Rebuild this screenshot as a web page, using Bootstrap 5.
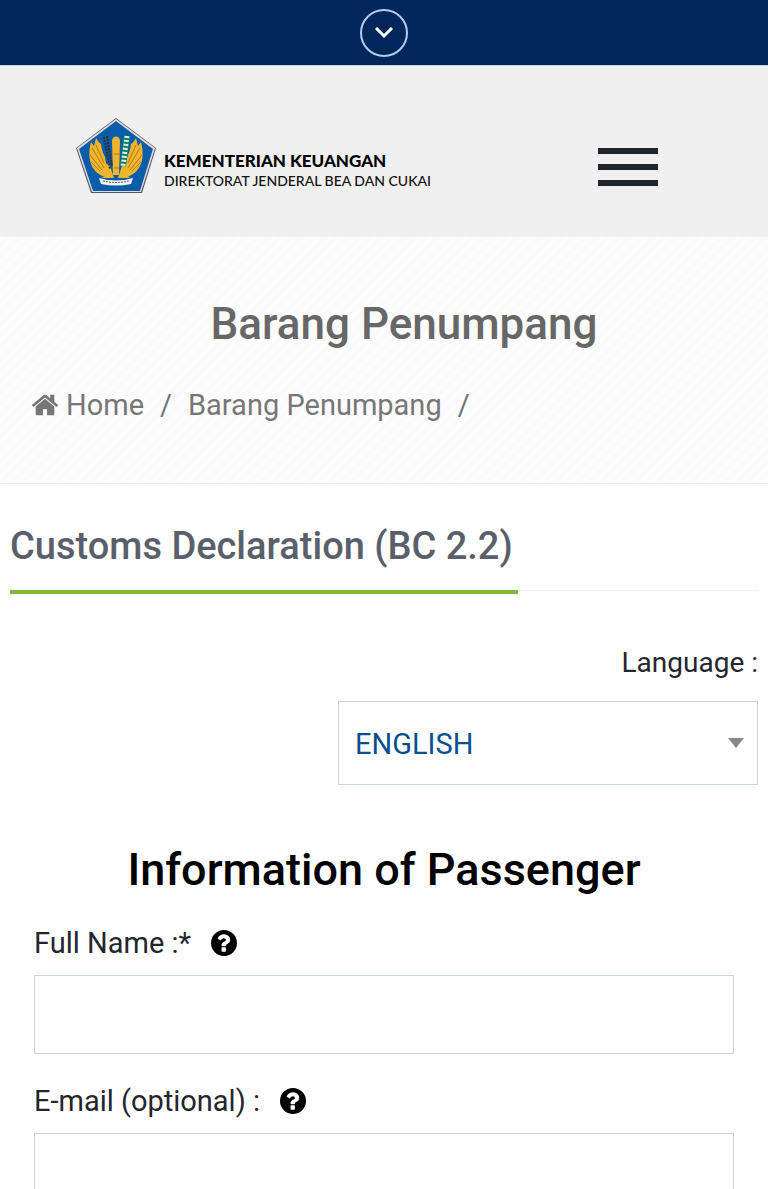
<!DOCTYPE html>
<html lang="en">
<head>
<meta charset="utf-8">
<meta name="viewport" content="width=device-width, initial-scale=1">
<title>Barang Penumpang</title>
<link href="https://cdn.jsdelivr.net/npm/bootstrap@5.3.0/dist/css/bootstrap.min.css" rel="stylesheet">
<style>
body { font-family: Roboto, sans-serif; font-size: 29px; line-height: 40px; color: #24262d; }
.topbar { background: #00265c; height: 65px; }
.round-toggle { width: 48px; height: 48px; border: 2px solid #b5cdec; }
.masthead { background: #f0f0f0; height: 172px; padding: 52px 110px 0 76px; border-top: 1px solid #c9d2df; }
.brand-name { font-family: Lato, sans-serif; color: #111; line-height: 20px; padding-top: 33px; }
.brand-name strong { font-size: 17px; font-weight: 900; color: #000; }
.brand-name span { font-size: 14px; font-weight: 500; }
.menu-toggle { gap: 10px; margin-top: 30px; }
.menu-bar { width: 60px; height: 6px; background: #22252b; }
.page-title { background: repeating-linear-gradient(135deg, #fdfdfd 0 4px, #fbfbfb 4px 8px); border-bottom: 1px solid #e9e9e9; padding: 60px 0 57px 32px; }
.page-title h1 { font-size: 44px; line-height: 54px; font-weight: 500; color: #676767; margin: 0 0 34px 8px; }
.crumbs { --bs-breadcrumb-divider-color: #6c757d; --bs-breadcrumb-item-padding-x: 16px; }
.crumbs a { color: #777; }
.section-head { border-bottom: 1px dotted #e4e4e4; margin: 32px 10px 0; height: 75px; }
.section-head h2 { font-size: 38px; line-height: 60px; font-weight: 500; color: #5a606b; border-bottom: 4px solid #7eb742; height: 78px; padding-right: 5px; margin: 0; }
.language { margin: 52px 10px 0; }
.language label { font-size: 28px; margin-bottom: 18px; }
.language select, .field input { font-size: 29px; border: 1px solid #ccd4d8; border-radius: 0; }
.language select { width: 420px; height: 84px; padding: 4px 16px 0; color: #084f8d; background-size: 16px 10px; background-position: right 13px center;
  background-image: url("data:image/svg+xml,%3Csvg xmlns='http://www.w3.org/2000/svg' viewBox='0 0 16 10'%3E%3Cpath d='M0 0h16L8 10z' fill='%23888'/%3E%3C/svg%3E"); }
.passenger { padding: 57px 34px 0; }
.passenger h2 { font-size: 45px; line-height: 56px; font-weight: 500; color: #000; margin: 0 0 25px; }
.field { margin-bottom: 27px; }
.field input { height: 79px; }
.field-head { margin-bottom: 12px; gap: 20px; }
</style>
</head>
<body>
<svg class="d-none" aria-hidden="true">
  <symbol id="help-icon" viewBox="128 128 1536 1536"><path d="M896 1248v-192q0-14-9-23t-23-9H672q-14 0-23 9t-9 23v192q0 14 9 23t23 9h192q14 0 23-9t9-23zm256-672q0-88-55.500-163T958 297t-170-41q-243 0-371 213-15 24 8 42l132 100q7 6 19 6 16 0 25-12 53-68 86-92 34-24 86-24 48 0 85.500 26t37.500 59q0 38-20 61t-68 45q-63 28-115.500 86.500T640 892v36q0 14 9 23t23 9h192q14 0 23-9t9-23q0-19 21.500-49.500T972 829q32-18 49-28.500t46-35 44.500-48 28-60.500 12.500-81z" transform="translate(112 128)" fill="#fff"/><path fill-rule="evenodd" d="M128 896a768 768 0 1 0 1536 0a768 768 0 1 0-1536 0zM1008 1376v-192q0-14-9-23t-23-9H784q-14 0-23 9t-9 23v192q0 14 9 23t23 9h192q14 0 23-9t9-23zm256-672q0-88-55.500-163T1070 425t-170-41q-243 0-371 213-15 24 8 42l132 100q7 6 19 6 16 0 25-12 53-68 86-92 34-24 86-24 48 0 85.500 26t37.500 59q0 38-20 61t-68 45q-63 28-115.500 86.500T752 1020v36q0 14 9 23t23 9h192q14 0 23-9t9-23q0-19 21.500-49.500T1084 957q32-18 49-28.500t46-35 44.500-48 28-60.500 12.500-81z"/></symbol>
</svg>
<div class="vh-100 overflow-hidden">
  <div class="topbar d-flex justify-content-center align-items-center">
    <button type="button" class="round-toggle btn rounded-circle p-0 d-flex align-items-center justify-content-center" aria-label="Show top bar">
      <svg width="20" height="12" viewBox="0 0 20 12" fill="none" stroke="#fff" stroke-width="3"><path d="M2 1l8 8 8-8"/></svg>
    </button>
  </div>
  <header class="masthead d-flex justify-content-between align-items-start">
    <a href="#" class="d-flex text-decoration-none">
      <svg class="flex-shrink-0" width="80" height="77" viewBox="0 0 80 77">
        <path d="M40 0L80 30 66 75H15L0 30z" fill="#555b63"/>
        <path d="M40 1L79 30 65 74H16L1 30z" fill="#dedfdc"/>
        <path d="M40 3L77 31 64 73H17L3 31z" fill="#0b5ca9"/>
        <g fill="#efb52c">
          <path id="wing" d="M30 59C17 56 10 43 15 24l3 4 2-8q2 4 5 6 1 8 4 13l1 6 4 7 1 6z"/>
          <path d="M50 59c13-3 20-16 15-35l-3 4-2-8q-2 4-5 6-1 8-4 13l-1 6-4 7-1 6z"/>
          <path d="M36 23c0-6 8-6 8 0l-1 34h-6z"/>
          <path d="M20 52c3-3 9-2 13-7l5 15H26l5-5zM60 52c-3-3-9-2-13-7l-5 15h12l-5-5z"/>
        </g>
        <g fill="none" stroke="#b07b16" stroke-width="1">
          <path d="M16 30l12 20M20 27l8 18M14 37l12 15M15 44l9 9M64 30L52 50M60 27l-8 18M66 37L54 52M65 44l-9 9M38 36h5M38 50h5"/>
        </g>
        <path d="M28 19l6 32M31 18l5 30" stroke="#302d35" stroke-width="2" stroke-dasharray="2 1" fill="none"/>
        <path d="M51 18l-4 30" stroke="#0b8268" stroke-width="6"/>
        <path d="M51 18l-4 30" stroke="#e0efd9" stroke-width="5" stroke-dasharray="2 2"/>
        <path d="M23 60q17 5 34 0l-2 6q-15 3-30 0z" fill="#f6f5ef"/>
        <path d="M27 63q13 3 26 0" stroke="#555" stroke-width="1" stroke-dasharray="2 1" fill="none"/>
      </svg>
      <div class="brand-name d-flex flex-column ms-2 text-nowrap"><strong>KEMENTERIAN KEUANGAN</strong><span>DIREKTORAT JENDERAL BEA DAN CUKAI</span></div>
    </a>
    <button type="button" class="menu-toggle btn border-0 rounded-0 p-0 d-flex flex-column" aria-label="Menu">
      <span class="menu-bar"></span><span class="menu-bar"></span><span class="menu-bar"></span>
    </button>
  </header>
  <section class="page-title">
    <h1 class="text-center">Barang Penumpang</h1>
    <nav aria-label="breadcrumb">
      <ol class="breadcrumb crumbs mb-0">
        <li class="breadcrumb-item"><a href="#" class="text-decoration-none d-inline-flex align-items-center gap-2"><svg width="26" height="22" viewBox="90 246 1612 1300" fill="#777"><path d="M1472 992v480q0 26-19 45t-45 19h-384v-384H768v384H384q-26 0-45-19t-19-45V992q0-1 .5-3t.5-3l575-474 575 474q1 2 1 6zm223-69l-62 74q-8 9-21 11h-3q-13 0-21-7L896 424l-692 577q-12 8-24 7-13-2-21-11l-62-74q-8-10-7-23.500T101 878l719-599q32-26 76-26t76 26l244 204V288q0-14 9-23t23-9h192q14 0 23 9t9 23v408l219 182q10 8 11 21.500t-7 23.500z"/></svg>Home</a></li>
        <li class="breadcrumb-item"><a href="#" class="text-decoration-none">Barang Penumpang</a></li>
        <li class="breadcrumb-item"></li>
      </ol>
    </nav>
  </section>
  <main>
    <div class="section-head"><h2 class="d-inline-block">Customs Declaration (BC 2.2)</h2></div>
    <div class="language d-flex flex-column align-items-end">
      <label for="language">Language :</label>
      <select id="language" class="form-select"><option>ENGLISH</option></select>
    </div>
    <form class="passenger">
      <h2 class="text-center">Information of Passenger</h2>
      <div class="field">
        <div class="field-head d-flex align-items-center">
          <label for="fullname">Full Name :*</label>
          <svg width="26" height="26"><use href="#help-icon"/></svg>
        </div>
        <input id="fullname" type="text" class="form-control">
      </div>
      <div class="field">
        <div class="field-head d-flex align-items-center">
          <label for="email">E-mail (optional) :</label>
          <svg width="26" height="26"><use href="#help-icon"/></svg>
        </div>
        <input id="email" type="email" class="form-control">
      </div>
    </form>
  </main>
</div>
<script src="https://cdn.jsdelivr.net/npm/bootstrap@5.3.0/dist/js/bootstrap.bundle.min.js"></script>
</body>
</html>
